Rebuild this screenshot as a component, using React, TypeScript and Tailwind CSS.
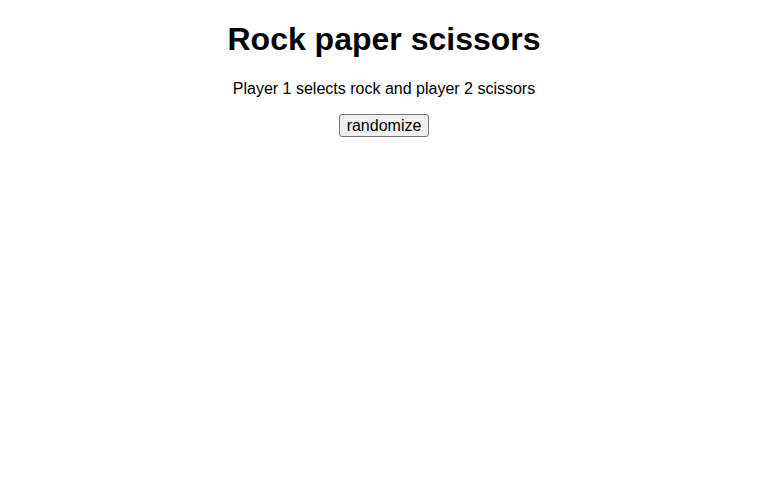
import { useState } from "react";

const moves = ["rock", "paper", "scissors"] as const;

type Move = (typeof moves)[number];

function pick(): Move {
  return moves[Math.floor(Math.random() * moves.length)];
}

export default function App() {
  const [p1, setP1] = useState<Move>("rock");
  const [p2, setP2] = useState<Move>("scissors");

  function randomize() {
    setP1(pick());
    setP2(pick());
  }

  return (
    <div className="min-h-screen bg-white text-center text-black font-['Liberation_Sans',Arial,sans-serif]">
      <h1 className="pt-[21px] text-[32px] font-bold leading-[37px]">Rock paper scissors</h1>
      <p className="mt-[22px] text-base leading-[18px]">
        Player 1 selects {p1} and player 2 {p2}
      </p>
      <button
        type="button"
        onClick={randomize}
        className="mt-[16px] rounded-[3px] border border-[#767676] bg-[#efefef] px-[7px] py-[1px] text-base leading-[19px] text-black hover:bg-[#e5e5e5]"
      >
        randomize
      </button>
    </div>
  );
}
